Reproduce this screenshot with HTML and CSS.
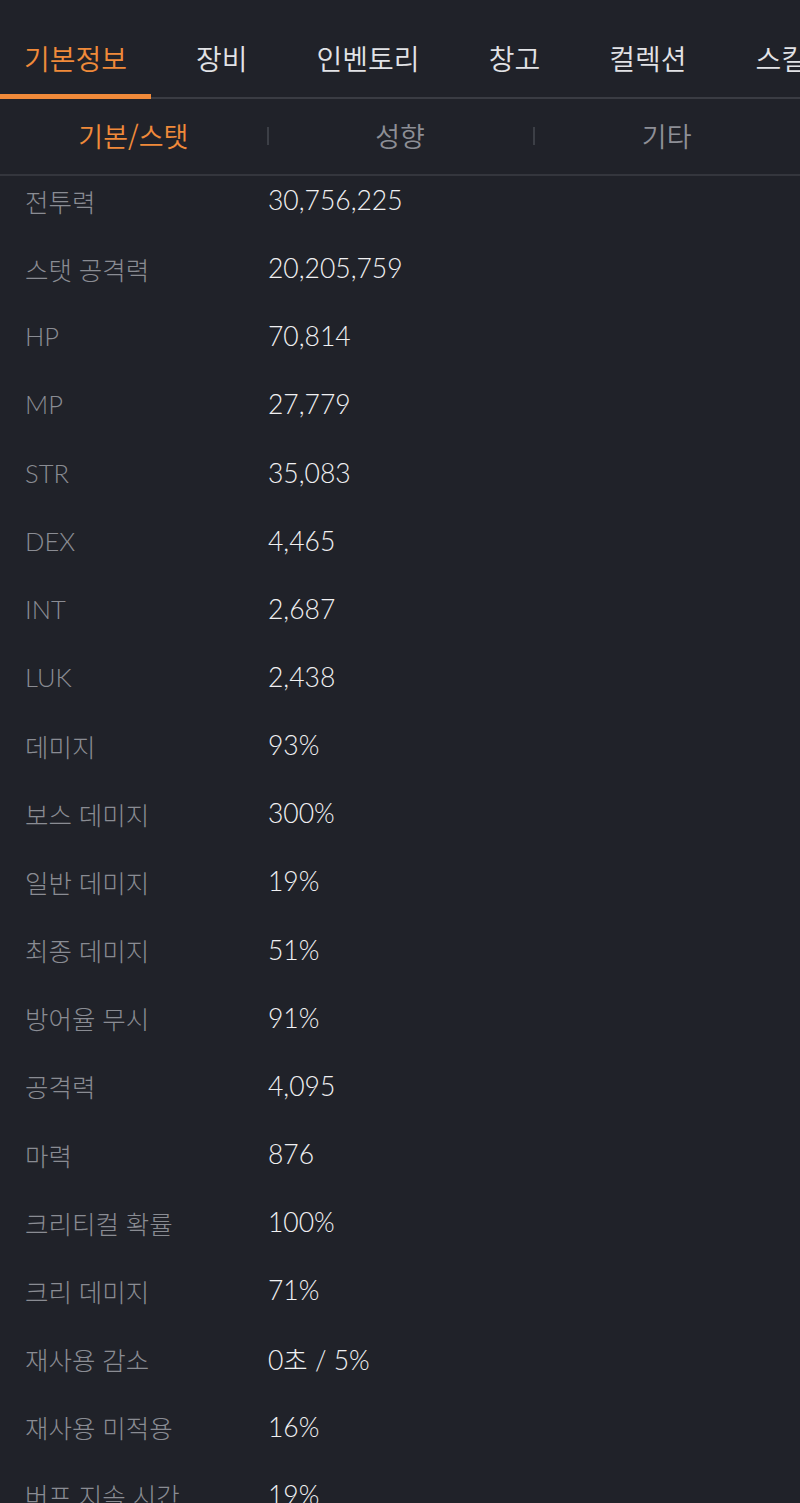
FILE: index.html
```html
<!DOCTYPE html>
<html lang="ko">
<head>
<meta charset="utf-8">
<link rel="stylesheet" href="styles.css">
</head>
<body>
<div class="page">
  <nav class="tabs">
    <div class="tab active">기본정보</div>
    <div class="tab">장비</div>
    <div class="tab">인벤토리</div>
    <div class="tab">창고</div>
    <div class="tab">컬렉션</div>
    <div class="tab">스킬</div>
  </nav>
  <nav class="subtabs">
    <div class="subtab active">기본/스탯</div>
    <div class="subtab">성향</div>
    <div class="subtab">기타</div>
  </nav>
  <div class="stats">
    <div class="row"><span class="label">전투력</span><span class="value">30,756,225</span></div>
    <div class="row"><span class="label">스탯 공격력</span><span class="value">20,205,759</span></div>
    <div class="row"><span class="label">HP</span><span class="value">70,814</span></div>
    <div class="row"><span class="label">MP</span><span class="value">27,779</span></div>
    <div class="row"><span class="label">STR</span><span class="value">35,083</span></div>
    <div class="row"><span class="label">DEX</span><span class="value">4,465</span></div>
    <div class="row"><span class="label">INT</span><span class="value">2,687</span></div>
    <div class="row"><span class="label">LUK</span><span class="value">2,438</span></div>
    <div class="row"><span class="label">데미지</span><span class="value">93%</span></div>
    <div class="row"><span class="label">보스 데미지</span><span class="value">300%</span></div>
    <div class="row"><span class="label">일반 데미지</span><span class="value">19%</span></div>
    <div class="row"><span class="label">최종 데미지</span><span class="value">51%</span></div>
    <div class="row"><span class="label">방어율 무시</span><span class="value">91%</span></div>
    <div class="row"><span class="label">공격력</span><span class="value">4,095</span></div>
    <div class="row"><span class="label">마력</span><span class="value">876</span></div>
    <div class="row"><span class="label">크리티컬 확률</span><span class="value">100%</span></div>
    <div class="row"><span class="label">크리 데미지</span><span class="value">71%</span></div>
    <div class="row"><span class="label">재사용 감소</span><span class="value">0초 / 5%</span></div>
    <div class="row"><span class="label">재사용 미적용</span><span class="value">16%</span></div>
    <div class="row"><span class="label">버프 지속 시간</span><span class="value">19%</span></div>
  </div>
</div>
</body>
</html>
```
FILE: styles.css
```css
* { box-sizing: border-box; }
html, body {
  margin: 0;
  padding: 0;
  background: #202229;
}
body {
  font-family: Lato, "Noto Sans CJK KR", sans-serif;
  color: #e6e6e8;
  overflow: hidden;
  height: 1503px;
}
.page {
  width: 800px;
  overflow: hidden;
}
.tabs {
  display: flex;
  height: 99px;
  padding-top: 28px;
  border-bottom: 2px solid #3a3c43;
  white-space: nowrap;
  gap: 21px;
}
.tab {
  flex: none;
  padding: 0 24px;
  font-family: "Noto Sans CJK KR", sans-serif;
  font-size: 28px;
  font-weight: 350;
  line-height: 60px;
  color: #e2e3e6;
  position: relative;
  height: 69px;
}
.tab.active {
  color: #f08a3a;
}
.tab.active::after {
  content: "";
  position: absolute;
  left: 0;
  right: 0;
  bottom: -2px;
  height: 5px;
  background: #f08a3a;
}
.subtabs {
  display: flex;
  height: 77px;
  border-bottom: 2px solid #34363d;
}
.subtab {
  flex: 1;
  text-align: center;
  font-family: "Noto Sans CJK KR", sans-serif;
  font-size: 27px;
  font-weight: 350;
  line-height: 74px;
  color: #8d8f96;
  position: relative;
}
.subtab.active { color: #f08a3a; }
.subtab + .subtab::before {
  content: "";
  position: absolute;
  left: 0;
  top: 28px;
  width: 2px;
  height: 18px;
  background: #3c3f46;
}
.stats {
  margin-top: -10px;
}
.row {
  display: flex;
  align-items: center;
  height: 68.15px;
  padding-left: 25px;
}
.label {
  width: 243px;
  font-family: Lato, "Noto Sans CJK KR", sans-serif;
  font-size: 25.5px;
  font-weight: 300;
  color: #8a8c93;
}
.value {
  font-size: 26.5px;
  font-weight: 300;
  color: #f0f0f2;
}
```
